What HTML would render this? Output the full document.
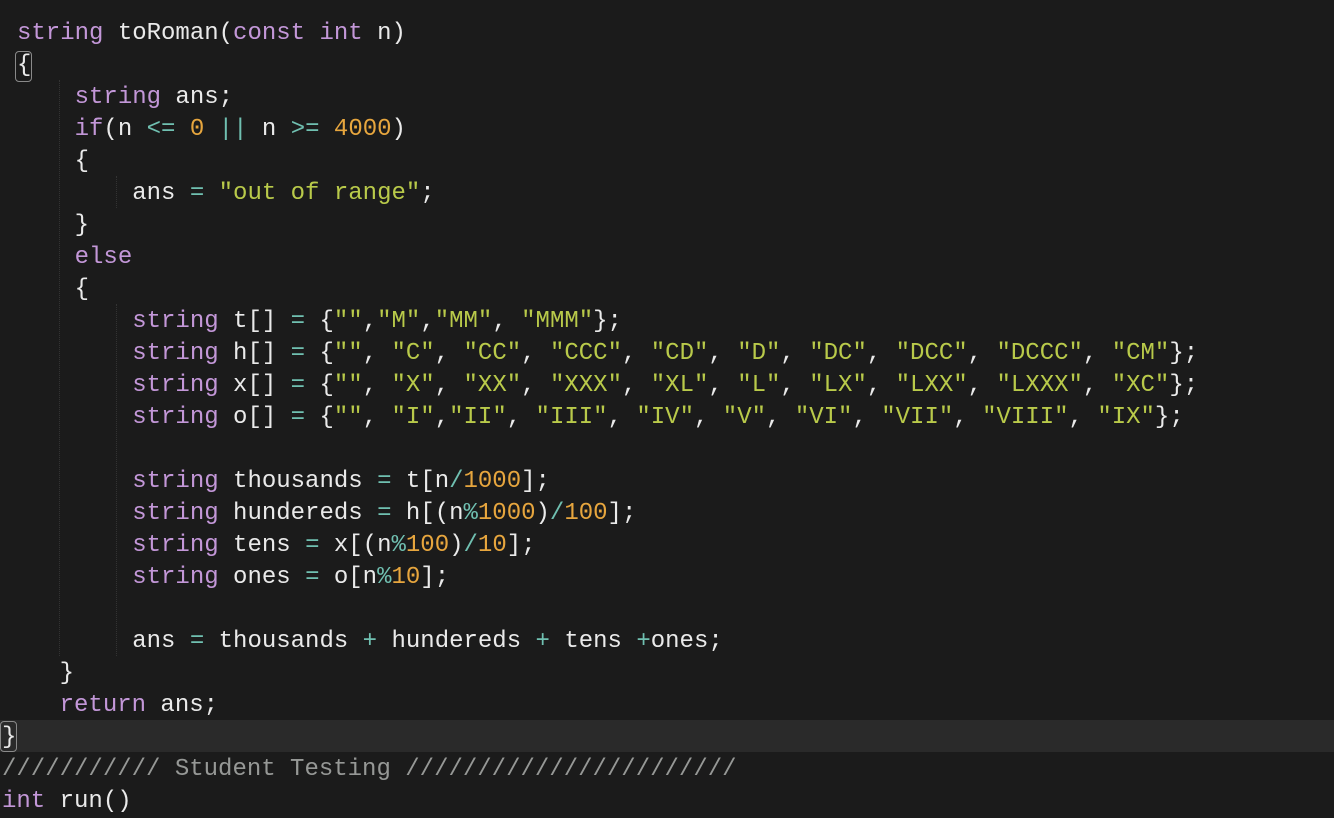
<!DOCTYPE html>
<html><head><meta charset="utf-8"><style>
body{margin:0;width:1334px;height:818px;background:#1b1b1b;overflow:hidden;position:relative;font-family:"Liberation Mono",monospace;font-size:24px;color:#eaeaea}
.l{position:absolute;height:32px;line-height:32px;white-space:pre;padding-top:2px;box-sizing:border-box}
.k{color:#c397d8}.o{color:#70c0b1}.n{color:#e7a63e}.s{color:#b9ca4a}.c{color:#969896}
.hl{position:absolute;left:0;top:720px;width:1334px;height:32px;background:#2a2a2a}
.g{position:absolute;width:0;border-left:1px dotted #333}
.box{position:absolute;border:1.5px solid #8a8a8a;border-radius:4px;width:15px;height:29px}
</style></head><body>
<div class="hl"></div>
<div class="g" style="left:59px;top:80px;height:576px"></div>
<div class="g" style="left:116px;top:176px;height:32px"></div>
<div class="g" style="left:116px;top:304px;height:352px"></div>
<div class="box" style="left:15px;top:51px"></div>
<div class="box" style="left:0px;top:721px"></div>
<div class="l" style="left:17px;top:16px"><span class="k">string</span> toRoman(<span class="k">const</span> <span class="k">int</span> n)</div>
<div class="l" style="left:17px;top:48px">{</div>
<div class="l" style="left:17px;top:80px">    <span class="k">string</span> ans;</div>
<div class="l" style="left:17px;top:112px">    <span class="k">if</span>(n <span class="o">&lt;=</span> <span class="n">0</span> <span class="o">||</span> n <span class="o">&gt;=</span> <span class="n">4000</span>)</div>
<div class="l" style="left:17px;top:144px">    {</div>
<div class="l" style="left:17px;top:176px">        ans <span class="o">=</span> <span class="s">"out of range"</span>;</div>
<div class="l" style="left:17px;top:208px">    }</div>
<div class="l" style="left:17px;top:240px">    <span class="k">else</span></div>
<div class="l" style="left:17px;top:272px">    {</div>
<div class="l" style="left:17px;top:304px">        <span class="k">string</span> t[] <span class="o">=</span> {<span class="s">""</span>,<span class="s">"M"</span>,<span class="s">"MM"</span>, <span class="s">"MMM"</span>};</div>
<div class="l" style="left:17px;top:336px">        <span class="k">string</span> h[] <span class="o">=</span> {<span class="s">""</span>, <span class="s">"C"</span>, <span class="s">"CC"</span>, <span class="s">"CCC"</span>, <span class="s">"CD"</span>, <span class="s">"D"</span>, <span class="s">"DC"</span>, <span class="s">"DCC"</span>, <span class="s">"DCCC"</span>, <span class="s">"CM"</span>};</div>
<div class="l" style="left:17px;top:368px">        <span class="k">string</span> x[] <span class="o">=</span> {<span class="s">""</span>, <span class="s">"X"</span>, <span class="s">"XX"</span>, <span class="s">"XXX"</span>, <span class="s">"XL"</span>, <span class="s">"L"</span>, <span class="s">"LX"</span>, <span class="s">"LXX"</span>, <span class="s">"LXXX"</span>, <span class="s">"XC"</span>};</div>
<div class="l" style="left:17px;top:400px">        <span class="k">string</span> o[] <span class="o">=</span> {<span class="s">""</span>, <span class="s">"I"</span>,<span class="s">"II"</span>, <span class="s">"III"</span>, <span class="s">"IV"</span>, <span class="s">"V"</span>, <span class="s">"VI"</span>, <span class="s">"VII"</span>, <span class="s">"VIII"</span>, <span class="s">"IX"</span>};</div>
<div class="l" style="left:17px;top:464px">        <span class="k">string</span> thousands <span class="o">=</span> t[n<span class="o">/</span><span class="n">1000</span>];</div>
<div class="l" style="left:17px;top:496px">        <span class="k">string</span> hundereds <span class="o">=</span> h[(n<span class="o">%</span><span class="n">1000</span>)<span class="o">/</span><span class="n">100</span>];</div>
<div class="l" style="left:17px;top:528px">        <span class="k">string</span> tens <span class="o">=</span> x[(n<span class="o">%</span><span class="n">100</span>)<span class="o">/</span><span class="n">10</span>];</div>
<div class="l" style="left:17px;top:560px">        <span class="k">string</span> ones <span class="o">=</span> o[n<span class="o">%</span><span class="n">10</span>];</div>
<div class="l" style="left:17px;top:624px">        ans <span class="o">=</span> thousands <span class="o">+</span> hundereds <span class="o">+</span> tens <span class="o">+</span>ones;</div>
<div class="l" style="left:2px;top:656px">    }</div>
<div class="l" style="left:2px;top:688px">    <span class="k">return</span> ans;</div>
<div class="l" style="left:2px;top:720px">}</div>
<div class="l c" style="left:2px;top:752px">/////////// Student Testing ///////////////////////</div>
<div class="l" style="left:2px;top:784px"><span class="k">int</span> run()</div>
</body></html>
